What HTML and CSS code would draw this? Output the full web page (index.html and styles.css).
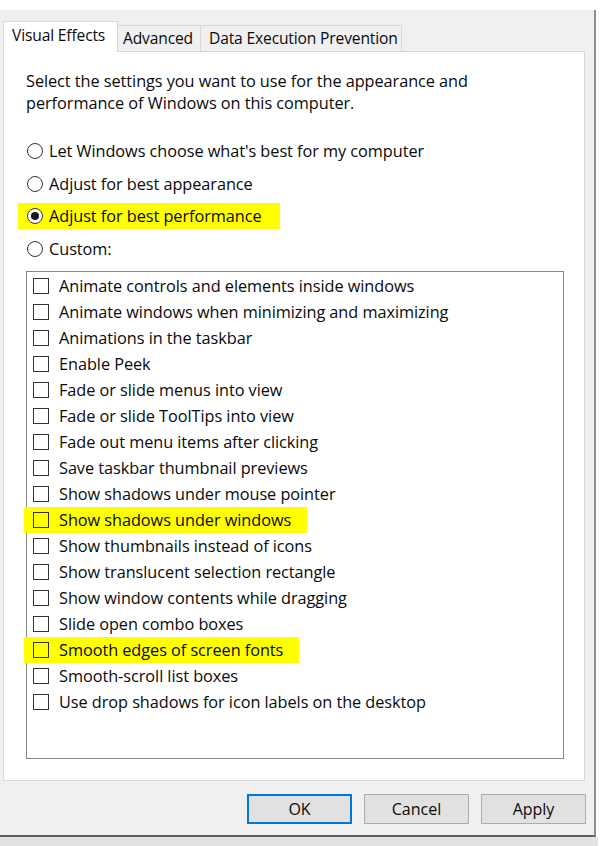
FILE: index.html
```html
<!DOCTYPE html>
<html lang="en">
<head>
<meta charset="utf-8">
<title>Performance Options</title>
<link rel="stylesheet" href="styles.css">
</head>
<body>
<div class="screen">
  <div class="dialog">
    <div class="tabs">
      <div class="tab active">Visual Effects</div>
      <div class="tab">Advanced</div>
      <div class="tab">Data Execution Prevention</div>
    </div>
    <div class="panel">
      <p class="intro">Select the settings you want to use for the appearance and<br>performance of Windows on this computer.</p>
      <div class="radios">
        <div class="radio-row"><span class="item"><span class="radio"></span><span class="label">Let Windows choose what's best for my computer</span></span></div>
        <div class="radio-row"><span class="item"><span class="radio"></span><span class="label">Adjust for best appearance</span></span></div>
        <div class="radio-row"><span class="item hl hl-radio"><span class="radio checked"></span><span class="label">Adjust for best performance</span></span></div>
        <div class="radio-row"><span class="item"><span class="radio"></span><span class="label">Custom:</span></span></div>
      </div>
      <div class="listbox">
        <div class="check-row"><span class="item"><span class="box"></span><span class="label">Animate controls and elements inside windows</span></span></div>
        <div class="check-row"><span class="item"><span class="box"></span><span class="label">Animate windows when minimizing and maximizing</span></span></div>
        <div class="check-row"><span class="item"><span class="box"></span><span class="label">Animations in the taskbar</span></span></div>
        <div class="check-row"><span class="item"><span class="box"></span><span class="label">Enable Peek</span></span></div>
        <div class="check-row"><span class="item"><span class="box"></span><span class="label">Fade or slide menus into view</span></span></div>
        <div class="check-row"><span class="item"><span class="box"></span><span class="label">Fade or slide ToolTips into view</span></span></div>
        <div class="check-row"><span class="item"><span class="box"></span><span class="label">Fade out menu items after clicking</span></span></div>
        <div class="check-row"><span class="item"><span class="box"></span><span class="label">Save taskbar thumbnail previews</span></span></div>
        <div class="check-row"><span class="item"><span class="box"></span><span class="label">Show shadows under mouse pointer</span></span></div>
        <div class="check-row"><span class="item hl hl-check"><span class="box"></span><span class="label">Show shadows under windows</span></span></div>
        <div class="check-row"><span class="item"><span class="box"></span><span class="label">Show thumbnails instead of icons</span></span></div>
        <div class="check-row"><span class="item"><span class="box"></span><span class="label">Show translucent selection rectangle</span></span></div>
        <div class="check-row"><span class="item"><span class="box"></span><span class="label">Show window contents while dragging</span></span></div>
        <div class="check-row"><span class="item"><span class="box"></span><span class="label">Slide open combo boxes</span></span></div>
        <div class="check-row"><span class="item hl hl-check"><span class="box"></span><span class="label">Smooth edges of screen fonts</span></span></div>
        <div class="check-row"><span class="item"><span class="box"></span><span class="label">Smooth-scroll list boxes</span></span></div>
        <div class="check-row"><span class="item"><span class="box"></span><span class="label">Use drop shadows for icon labels on the desktop</span></span></div>
      </div>
    </div>
    <div class="buttons">
      <button class="btn default">OK</button>
      <button class="btn">Cancel</button>
      <button class="btn">Apply</button>
    </div>
  </div>
  <div class="below"></div>
</div>
</body>
</html>
```

FILE: styles.css
```css
* { box-sizing: border-box; }
html, body { margin: 0; padding: 0; background: #ffffff; }
body {
  font-family: "Open Sans", "Noto Sans", sans-serif;
  color: #0a0a0a;
  width: 600px;
  height: 846px;
  overflow: hidden;
}
.screen { padding-top: 10px; }
.dialog {
  width: 596px;
  height: 827px;
  background: #f0f0f0;
  border-right: 2px solid #8e8e8e;
  border-bottom: 2px solid #5f5f5f;
  padding: 11px 0 0 3px;
  display: flex;
  flex-direction: column;
}
.below { height: 9px; background: #e2e2e2; width: 598px; }

.tabs { display: flex; align-items: flex-end; height: 30px; position: relative; z-index: 1; }
.tab {
  height: 26px;
  border: 1px solid #d9d9d9;
  border-bottom: none;
  background: #f0f0f0;
  font-size: 15.6px;
  letter-spacing: -0.15px;
  line-height: 24px;
  padding: 0 5px 0 5px;
  margin-left: -1px;
  white-space: nowrap;
}
.tab:nth-child(2) { width: 84px; }
.tab:nth-child(3) { width: 202px; padding-left: 8px; padding-right: 0; }
.tab.active {
  width: 115px;
  background: #ffffff;
  margin-left: 0;
  padding-left: 8px;
  line-height: 27px;
  margin-bottom: -1px;
  height: 31px;
}
.panel {
  width: 582px;
  height: 730px;
  background: #ffffff;
  border: 1px solid #d9d9d9;
  padding: 18px 0 0 22px;
  font-size: 16.3px;
  letter-spacing: -0.05px;
}
.intro { margin: 0; line-height: 22px; }
.radios { margin-top: 21px; }
.radio-row { height: 32.6px; display: flex; align-items: center; }
.item { display: inline-flex; align-items: center; height: 26px; }
.radio {
  width: 16px; height: 16px;
  border: 1.3px solid #333333;
  border-radius: 50%;
  margin-left: 1px;
  margin-right: 6px;
  display: inline-flex; align-items: center; justify-content: center;
  background: #ffffff;
}
.radio.checked::after {
  content: "";
  width: 8px; height: 8px; border-radius: 50%;
  background: #1a1a1a;
}
.hl { background: #ffff00; }
.hl-radio { margin-left: -8px; padding-left: 8px; padding-right: 18px; }
.listbox {
  margin-top: 6px;
  width: 538px;
  height: 488px;
  border: 1px solid #828790;
  padding: 1px 0 0 6px;
}
.check-row { height: 26px; display: flex; align-items: center; }
.box {
  width: 16px; height: 16px;
  border: 1.3px solid #333333;
  background: #ffffff;
  margin-right: 10px;
}
.hl .box { background: transparent; }
.hl-check { margin-left: -9px; padding-left: 9px; padding-right: 16px; }

.buttons {
  display: flex;
  justify-content: flex-end;
  gap: 12px;
  padding: 13px 8px 0 0;
}
.btn {
  width: 105px; height: 30px;
  background: #e1e1e1;
  border: 1px solid #adadad;
  font-family: "Open Sans", "Noto Sans", sans-serif;
  font-size: 16px;
  color: #0a0a0a;
  padding: 0;
}
.btn.default { border: 2px solid #0078d7; }
```
